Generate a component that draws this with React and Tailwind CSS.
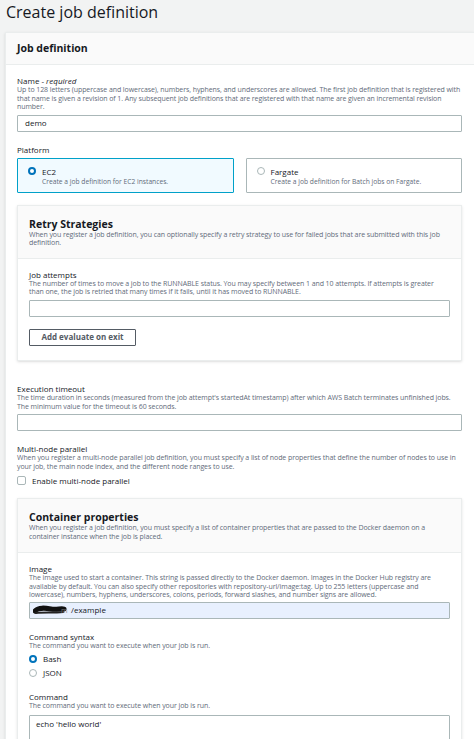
import React from 'react';

const Label = ({ children, className = '' }) => (
  <div className={`text-[8px] leading-[11px] text-[#16191f] ${className}`}>{children}</div>
);

const Desc = ({ children }) => (
  <p className="text-[7px] leading-[8.5px] tracking-[-0.08px] text-[#5f6b7a]">{children}</p>
);

const Input = ({ value = '', className = '' }) => (
  <div className={`h-[17px] border border-[#aab7b8] rounded-[1px] bg-white px-[7px] flex items-center text-[8px] text-[#16191f] ${className}`}>
    {value}
  </div>
);

const Radio = ({ checked }) =>
  checked ? (
    <span className="block w-[8px] h-[8px] rounded-full border-[2.5px] border-[#0073bb] bg-white shrink-0" />
  ) : (
    <span className="block w-[8px] h-[8px] rounded-full border border-[#aab7b8] bg-white shrink-0" />
  );

const Tile = ({ checked, title, desc }) => (
  <div
    className={`h-[35px] rounded-[1px] border flex items-start gap-[6px] pl-[10px] pt-[7px] ${
      checked ? 'border-[#00a1c9] bg-[#f1faff]' : 'border-[#aab7b8] bg-white'
    }`}
  >
    <div className="mt-[1.5px]">
      <Radio checked={checked} />
    </div>
    <div>
      <div className="text-[8px] leading-[11px] text-[#16191f]">{title}</div>
      <div className="text-[6.7px] leading-[9px] text-[#5f6b7a]">{desc}</div>
    </div>
  </div>
);

const Redacted = () => (
  <svg width="38" height="12" viewBox="0 0 38 12" className="shrink-0">
    <path d="M2 7 C6 3, 12 4, 18 5 C24 6, 28 4, 31 5" stroke="#111" strokeWidth="5" fill="none" strokeLinecap="round" />
    <path d="M3 9 C10 8, 20 9, 30 8" stroke="#222" strokeWidth="2" fill="none" strokeLinecap="round" />
    <text x="28" y="9" fontSize="7" fill="#777">m</text>
  </svg>
);

export default function App() {
  return (
    <div className="w-[474px] h-[739px] overflow-hidden bg-[#f2f3f3] font-['Open_Sans',sans-serif] text-[#16191f]">
      {/* Page title */}
      <h1 className="h-[32px] pl-[6px] text-[16px] leading-[24px] text-[#16191f]">Create job definition</h1>

      {/* Job definition card */}
      <div className="ml-[5px] w-[469px] bg-white border border-r-0 border-[#eaeded] shadow-sm">
        <div className="h-[32px] bg-[#fafafa] border-b border-[#eaeded] px-[11px] flex items-center">
          <h2 className="text-[10.5px] font-bold">Job definition</h2>
        </div>

        <div className="pl-[11px] pr-[12px] pt-[10px]">
          {/* Name */}
          <Label>
            Name - <i>required</i>
          </Label>
          <Desc>
            Up to 128 letters (uppercase and lowercase), numbers, hyphens, and underscores are allowed. The first job definition that is registered with that name is given a revision of 1. Any subsequent job definitions that are registered with that name are given an incremental revision number.
          </Desc>
          <Input value="demo" className="mt-[3px]" />

          {/* Platform */}
          <Label className="mt-[12px]">Platform</Label>
          <div className="grid grid-cols-2 gap-[12px] mt-[3px]">
            <Tile checked title="EC2" desc="Create a job definition for EC2 instances." />
            <Tile title="Fargate" desc="Create a job definition for Batch jobs on Fargate." />
          </div>

          {/* Retry strategies */}
          <div className="mt-[12px] border border-[#eaeded] shadow-sm">
            <div className="bg-[#fafafa] border-b border-[#eaeded] px-[11px] pt-[11px] pb-[10px]">
              <h3 className="text-[10.5px] leading-[14px] font-bold">Retry Strategies</h3>
              <Desc>
                When you register a job definition, you can optionally specify a retry strategy to use for failed jobs that are submitted with this job definition.
              </Desc>
            </div>
            <div className="px-[11px] pt-[10px] pb-[14px]">
              <Label>Job attempts</Label>
              <Desc>
                The number of times to move a job to the RUNNABLE status. You may specify between 1 and 10 attempts. If attempts is greater than one, the job is retried that many times if it fails, until it has moved to RUNNABLE.
              </Desc>
              <Input className="mt-[3px]" />
              <button className="mt-[12px] h-[17px] w-[107px] border border-[#545b64] rounded-[1px] bg-white text-[8px] font-bold text-[#545b64]">
                Add evaluate on exit
              </button>
            </div>
          </div>

          {/* Execution timeout */}
          <Label className="mt-[22px]">Execution timeout</Label>
          <Desc>
            The time duration in seconds (measured from the job attempt's startedAt timestamp) after which AWS Batch terminates unfinished jobs. The minimum value for the timeout is 60 seconds.
          </Desc>
          <Input className="mt-[3px]" />

          {/* Multi-node parallel */}
          <Label className="mt-[12px]">Multi-node parallel</Label>
          <Desc>
            When you register a multi-node parallel job definition, you must specify a list of node properties that define the number of nodes to use in your job, the main node index, and the different node ranges to use.
          </Desc>
          <label className="mt-[4px] flex items-center gap-[6px]">
            <span className="w-[9px] h-[9px] rounded-[2px] border border-[#aab7b8] bg-white" />
            <span className="text-[8px] leading-[11px]">Enable multi-node parallel</span>
          </label>

          {/* Container properties */}
          <div className="mt-[12px] border border-[#eaeded] shadow-sm">
            <div className="bg-[#fafafa] border-b border-[#eaeded] px-[11px] pt-[11px] pb-[11px]">
              <h3 className="text-[10.5px] leading-[14px] font-bold">Container properties</h3>
              <Desc>
                When you register a job definition, you must specify a list of container properties that are passed to the Docker daemon on a container instance when the job is placed.
              </Desc>
            </div>
            <div className="px-[11px] pt-[10px] pb-[12px]">
              <Label>Image</Label>
              <Desc>
                The image used to start a container. This string is passed directly to the Docker daemon. Images in the Docker Hub registry are available by default. You can also specify other repositories with repository-url/image:tag. Up to 255 letters (uppercase and lowercase), numbers, hyphens, underscores, colons, periods, forward slashes, and number signs are allowed.
              </Desc>
              <div className="mt-[2px] h-[17px] border border-[#aab7b8] rounded-[1px] bg-[#e8f0fe] pl-[3px] flex items-center text-[8px]">
                <Redacted />
                <span>/example</span>
              </div>

              <Label className="mt-[12px]">Command syntax</Label>
              <Desc>The command you want to execute when your job is run.</Desc>
              <div className="mt-[3px] flex flex-col gap-[3px]">
                <div className="flex items-center gap-[6px]">
                  <Radio checked />
                  <span className="text-[8px] leading-[11px]">Bash</span>
                </div>
                <div className="flex items-center gap-[6px]">
                  <Radio />
                  <span className="text-[8px] leading-[11px]">JSON</span>
                </div>
              </div>

              <Label className="mt-[13px]">Command</Label>
              <Desc>The command you want to execute when your job is run.</Desc>
              <div className="mt-[4px] h-[40px] border border-[#aab7b8] rounded-[1px] bg-white px-[6px] pt-[2px] text-[8px] leading-[11px]">
                echo 'hello world'
              </div>
            </div>
          </div>
        </div>
      </div>
    </div>
  );
}
